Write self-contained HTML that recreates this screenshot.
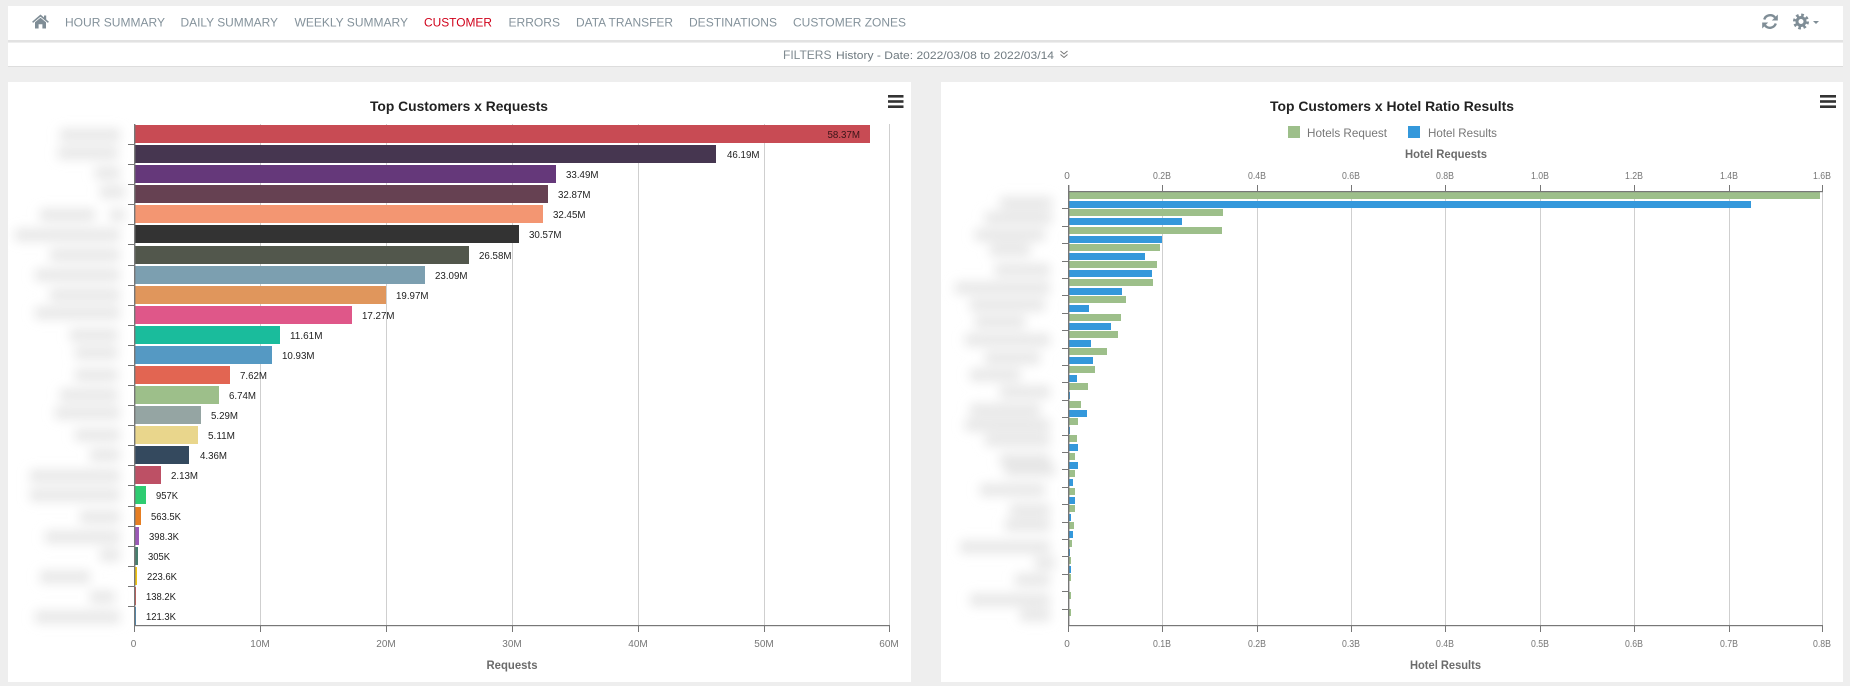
<!DOCTYPE html>
<html><head><meta charset="utf-8"><title>Customer</title>
<style>
html,body{margin:0;padding:0;background:#eee;width:1850px;height:686px;overflow:hidden}
svg{display:block;font-family:"Liberation Sans",sans-serif}
.n{font-size:12px;fill:#84929b}
.v{font-size:10px;fill:#222}
.a{font-size:10px;fill:#777}
.t{font-size:14px;font-weight:bold;fill:#222}
.h{font-size:12px;font-weight:bold;fill:#6b6b6b}
.l{font-size:12px;fill:#777}
.g{fill:#9dbf8a}.b{fill:#3498db}.ax{fill:#777}.gl{fill:#cfcfcf}
.sm rect{fill:#e6e6e6;height:12px;transform:translateY(-2px)}
</style></head><body>
<svg width="1850" height="686" viewBox="0 0 1850 686" xmlns="http://www.w3.org/2000/svg">
<defs><filter id="bl" x="-20%" y="-5%" width="140%" height="110%"><feGaussianBlur stdDeviation="5.5"/></filter></defs>
<rect width="1850" height="686" fill="#eee"/>
<!-- nav -->
<rect x="8" y="6" width="1835" height="34" fill="#fff"/>
<rect x="8" y="40" width="1835" height="2" fill="#e2e2e2"/>
<rect x="8" y="43" width="1835" height="23" fill="#fff"/>
<rect x="8" y="66" width="1835" height="1" fill="#ddd"/>
<!-- home -->
<g fill="#7f8d96">
<path d="M35 22.3L40.5 17.8L46 22.3V28.5H42.4V24.2H38.6V28.5H35Z"/>
<path d="M32.6 22.3L40.5 15.6L48.4 22.3" fill="none" stroke="#7f8d96" stroke-width="1.6"/>
<rect x="44" y="15.5" width="2.2" height="4"/>
</g>
<text class="n" x="65" y="26.5" textLength="100" lengthAdjust="spacingAndGlyphs">HOUR SUMMARY</text>
<text class="n" x="180.5" y="26.5" textLength="97.5" lengthAdjust="spacingAndGlyphs">DAILY SUMMARY</text>
<text class="n" x="294.5" y="26.5" textLength="113.5" lengthAdjust="spacingAndGlyphs">WEEKLY SUMMARY</text>
<text class="n" x="424" y="26.5" textLength="68" lengthAdjust="spacingAndGlyphs" style="fill:#d0021b">CUSTOMER</text>
<text class="n" x="508.5" y="26.5" textLength="51.5" lengthAdjust="spacingAndGlyphs">ERRORS</text>
<text class="n" x="576" y="26.5" textLength="97" lengthAdjust="spacingAndGlyphs">DATA TRANSFER</text>
<text class="n" x="689" y="26.5" textLength="88" lengthAdjust="spacingAndGlyphs">DESTINATIONS</text>
<text class="n" x="793" y="26.5" textLength="113" lengthAdjust="spacingAndGlyphs">CUSTOMER ZONES</text>
<!-- refresh -->
<g fill="none" stroke="#7f8d96" stroke-width="2.4">
<path d="M1764.2 19.5A6.3 6.3 0 0 1 1775 17.5"/>
<path d="M1775.8 23.5A6.3 6.3 0 0 1 1765 25.5"/>
</g>
<polygon points="1777.8,14.5 1777.8,20.5 1771.8,20.5" fill="#7f8d96"/>
<polygon points="1762.2,28.5 1762.2,22.5 1768.2,22.5" fill="#7f8d96"/>
<!-- gear -->
<circle cx="1801" cy="21.5" r="4" fill="none" stroke="#7f8d96" stroke-width="3"/>
<circle cx="1801" cy="21.5" r="6.5" fill="none" stroke="#7f8d96" stroke-width="3" stroke-dasharray="2.6 2.5"/>
<polygon points="1813,21 1819,21 1816,24" fill="#7f8d96"/>
<!-- filter -->
<text class="n" x="783" y="59" textLength="48.5" lengthAdjust="spacingAndGlyphs" style="fill:#7f8a90">FILTERS</text>
<text x="836" y="59" textLength="218" lengthAdjust="spacingAndGlyphs" style="font-size:11px;fill:#6f7a80">History - Date: 2022/03/08 to 2022/03/14</text>
<path d="M1060.5 51L1064 54L1067.5 51M1060.5 54.5L1064 57.5L1067.5 54.5" fill="none" stroke="#777" stroke-width="1"/>

<!-- LEFT PANEL -->
<rect x="8" y="82" width="903" height="600" fill="#fff"/>
<text class="t" x="459" y="111" text-anchor="middle" textLength="178" lengthAdjust="spacingAndGlyphs">Top Customers x Requests</text>
<g fill="#333"><rect x="888" y="95" width="15.5" height="2.6"/><rect x="888" y="100.2" width="15.5" height="2.6"/><rect x="888" y="105.4" width="15.5" height="2.6"/></g>
<g class="sm" filter="url(#bl)">
<rect x="60" y="131" width="60" height="8"/><rect x="58" y="149" width="60" height="8"/><rect x="95" y="169" width="25" height="8"/><rect x="100" y="188" width="25" height="8"/>
<rect x="40" y="211" width="55" height="8"/><rect x="110" y="211" width="15" height="8"/><rect x="15" y="231" width="105" height="8"/><rect x="50" y="251" width="70" height="7"/>
<rect x="35" y="271" width="85" height="8"/><rect x="50" y="291" width="70" height="8"/><rect x="35" y="309" width="85" height="8"/><rect x="70" y="331" width="48" height="8"/>
<rect x="75" y="349" width="43" height="8"/><rect x="75" y="371" width="43" height="8"/><rect x="60" y="391" width="58" height="8"/><rect x="55" y="409" width="65" height="8"/>
<rect x="75" y="431" width="45" height="8"/><rect x="90" y="451" width="30" height="8"/><rect x="30" y="472" width="90" height="8"/><rect x="30" y="491" width="90" height="8"/>
<rect x="80" y="513" width="40" height="8"/><rect x="45" y="533" width="75" height="8"/><rect x="100" y="551" width="20" height="8"/><rect x="40" y="573" width="50" height="8"/>
<rect x="90" y="593" width="25" height="8"/><rect x="35" y="613" width="85" height="8"/>
</g>
<g class="gl">
<rect x="260" y="124" width="1" height="501"/><rect x="386" y="124" width="1" height="501"/><rect x="512" y="124" width="1" height="501"/><rect x="638" y="124" width="1" height="501"/><rect x="764" y="124" width="1" height="501"/><rect x="889" y="124" width="1" height="501"/>
</g>
<rect x="135" y="125" width="735" height="18" fill="#c84b54"/>
<rect x="135" y="145" width="581" height="18" fill="#463650"/>
<rect x="135" y="165" width="421" height="18" fill="#65387a"/>
<rect x="135" y="185" width="413" height="18" fill="#664152"/>
<rect x="135" y="205" width="408" height="18" fill="#f39672"/>
<rect x="135" y="225" width="384" height="18" fill="#333"/>
<rect x="135" y="246" width="334" height="18" fill="#52574c"/>
<rect x="135" y="266" width="290" height="18" fill="#7c9fb0"/>
<rect x="135" y="286" width="251" height="18" fill="#e0965c"/>
<rect x="135" y="306" width="217" height="18" fill="#df5789"/>
<rect x="135" y="326" width="145" height="18" fill="#1abc9c"/>
<rect x="135" y="346" width="137" height="18" fill="#5599c3"/>
<rect x="135" y="366" width="95" height="18" fill="#e26552"/>
<rect x="135" y="386" width="84" height="18" fill="#9dbf8a"/>
<rect x="135" y="406" width="66" height="18" fill="#95a5a3"/>
<rect x="135" y="426" width="63" height="18" fill="#e9d68c"/>
<rect x="135" y="446" width="54" height="18" fill="#34495e"/>
<rect x="135" y="466" width="26" height="18" fill="#bd5065"/>
<rect x="135" y="486" width="11" height="18" fill="#2ecc71"/>
<rect x="135" y="507" width="6" height="18" fill="#e67e22"/>
<rect x="135" y="527" width="4" height="18" fill="#9b59b6"/>
<rect x="135" y="547" width="3" height="18" fill="#477d6d"/>
<rect x="135" y="567" width="2" height="18" fill="#f1c40f"/>
<rect x="135" y="587" width="1" height="18" fill="#d9534f"/>
<rect x="135" y="607" width="1" height="18" fill="#3f8fc4"/>
<g class="ax">
<rect x="134" y="124" width="1.4" height="502"/><rect x="134" y="625" width="756" height="1.2"/>
<rect x="128" y="144" width="6" height="1"/><rect x="128" y="164" width="6" height="1"/><rect x="128" y="184" width="6" height="1"/><rect x="128" y="204" width="6" height="1"/><rect x="128" y="224" width="6" height="1"/><rect x="128" y="244" width="6" height="1"/><rect x="128" y="265" width="6" height="1"/><rect x="128" y="285" width="6" height="1"/><rect x="128" y="305" width="6" height="1"/><rect x="128" y="325" width="6" height="1"/><rect x="128" y="345" width="6" height="1"/><rect x="128" y="365" width="6" height="1"/><rect x="128" y="385" width="6" height="1"/><rect x="128" y="405" width="6" height="1"/><rect x="128" y="425" width="6" height="1"/><rect x="128" y="445" width="6" height="1"/><rect x="128" y="465" width="6" height="1"/><rect x="128" y="485" width="6" height="1"/><rect x="128" y="506" width="6" height="1"/><rect x="128" y="526" width="6" height="1"/><rect x="128" y="546" width="6" height="1"/><rect x="128" y="566" width="6" height="1"/><rect x="128" y="586" width="6" height="1"/><rect x="128" y="606" width="6" height="1"/>
<rect x="134" y="625" width="1" height="7"/><rect x="260" y="625" width="1" height="7"/><rect x="386" y="625" width="1" height="7"/><rect x="512" y="625" width="1" height="7"/><rect x="638" y="625" width="1" height="7"/><rect x="764" y="625" width="1" height="7"/><rect x="889" y="625" width="1" height="7"/>
</g>
<text class="v" x="827.5" y="138" textLength="32.5" lengthAdjust="spacingAndGlyphs" style="fill:#3a1518">58.37M</text>
<text class="v" x="727" y="158" textLength="32.5" lengthAdjust="spacingAndGlyphs">46.19M</text>
<text class="v" x="566" y="178" textLength="32.5" lengthAdjust="spacingAndGlyphs">33.49M</text>
<text class="v" x="558" y="198" textLength="32.5" lengthAdjust="spacingAndGlyphs">32.87M</text>
<text class="v" x="553" y="218" textLength="32.5" lengthAdjust="spacingAndGlyphs">32.45M</text>
<text class="v" x="529" y="238" textLength="32.5" lengthAdjust="spacingAndGlyphs">30.57M</text>
<text class="v" x="479" y="259" textLength="32.5" lengthAdjust="spacingAndGlyphs">26.58M</text>
<text class="v" x="435" y="279" textLength="32.5" lengthAdjust="spacingAndGlyphs">23.09M</text>
<text class="v" x="396" y="299" textLength="32.5" lengthAdjust="spacingAndGlyphs">19.97M</text>
<text class="v" x="362" y="319" textLength="32.5" lengthAdjust="spacingAndGlyphs">17.27M</text>
<text class="v" x="290" y="339" textLength="32.5" lengthAdjust="spacingAndGlyphs">11.61M</text>
<text class="v" x="282" y="359" textLength="32.5" lengthAdjust="spacingAndGlyphs">10.93M</text>
<text class="v" x="240" y="379" textLength="27" lengthAdjust="spacingAndGlyphs">7.62M</text>
<text class="v" x="229" y="399" textLength="27" lengthAdjust="spacingAndGlyphs">6.74M</text>
<text class="v" x="211" y="419" textLength="27" lengthAdjust="spacingAndGlyphs">5.29M</text>
<text class="v" x="208" y="439" textLength="27" lengthAdjust="spacingAndGlyphs">5.11M</text>
<text class="v" x="200" y="459" textLength="27" lengthAdjust="spacingAndGlyphs">4.36M</text>
<text class="v" x="171" y="479" textLength="27" lengthAdjust="spacingAndGlyphs">2.13M</text>
<text class="v" x="156" y="499" textLength="22" lengthAdjust="spacingAndGlyphs">957K</text>
<text class="v" x="151" y="520" textLength="30" lengthAdjust="spacingAndGlyphs">563.5K</text>
<text class="v" x="149" y="540" textLength="30" lengthAdjust="spacingAndGlyphs">398.3K</text>
<text class="v" x="148" y="560" textLength="22" lengthAdjust="spacingAndGlyphs">305K</text>
<text class="v" x="147" y="580" textLength="30" lengthAdjust="spacingAndGlyphs">223.6K</text>
<text class="v" x="146" y="600" textLength="30" lengthAdjust="spacingAndGlyphs">138.2K</text>
<text class="v" x="146" y="620" textLength="30" lengthAdjust="spacingAndGlyphs">121.3K</text>
<g class="a" text-anchor="middle">
<text x="133.5" y="647">0</text><text x="260" y="647">10M</text><text x="386" y="647">20M</text><text x="512" y="647">30M</text><text x="638" y="647">40M</text><text x="764" y="647">50M</text><text x="889" y="647">60M</text>
</g>
<text class="h" x="512" y="669" text-anchor="middle" textLength="51" lengthAdjust="spacingAndGlyphs">Requests</text>

<!-- RIGHT PANEL -->
<rect x="941" y="82" width="902" height="600" fill="#fff"/>
<text class="t" x="1392" y="111" text-anchor="middle" textLength="244" lengthAdjust="spacingAndGlyphs">Top Customers x Hotel Ratio Results</text>
<g fill="#333"><rect x="1820" y="95" width="16" height="2.6"/><rect x="1820" y="100.2" width="16" height="2.6"/><rect x="1820" y="105.4" width="16" height="2.6"/></g>
<rect x="1288" y="126" width="12" height="12" fill="#9dbf8a"/>
<text class="l" x="1307" y="137" textLength="80" lengthAdjust="spacingAndGlyphs">Hotels Request</text>
<rect x="1408" y="126" width="12" height="12" fill="#3498db"/>
<text class="l" x="1428" y="137" textLength="69" lengthAdjust="spacingAndGlyphs">Hotel Results</text>
<text class="h" x="1446" y="158" text-anchor="middle" textLength="82" lengthAdjust="spacingAndGlyphs">Hotel Requests</text>
<g class="sm" filter="url(#bl)">
<rect x="1000" y="199" width="52" height="8"/><rect x="985" y="214" width="67" height="8"/><rect x="975" y="231" width="70" height="8"/><rect x="990" y="246" width="40" height="8"/>
<rect x="995" y="266" width="55" height="8"/><rect x="955" y="284" width="95" height="8"/><rect x="970" y="301" width="75" height="8"/><rect x="975" y="318" width="50" height="8"/>
<rect x="965" y="336" width="85" height="8"/><rect x="985" y="354" width="55" height="8"/><rect x="970" y="371" width="50" height="8"/><rect x="1000" y="388" width="50" height="8"/>
<rect x="970" y="406" width="70" height="8"/><rect x="965" y="421" width="85" height="8"/><rect x="985" y="436" width="65" height="8"/><rect x="1000" y="456" width="50" height="8"/>
<rect x="1005" y="466" width="50" height="8"/><rect x="980" y="486" width="65" height="8"/><rect x="1010" y="506" width="40" height="8"/><rect x="1005" y="521" width="45" height="8"/>
<rect x="960" y="543" width="90" height="8"/><rect x="1035" y="559" width="20" height="8"/><rect x="1015" y="576" width="35" height="8"/><rect x="970" y="596" width="80" height="8"/><rect x="1020" y="611" width="30" height="8"/>
</g>
<g class="gl">
<rect x="1162" y="185" width="1" height="440"/><rect x="1257" y="185" width="1" height="440"/><rect x="1351" y="185" width="1" height="440"/><rect x="1445" y="185" width="1" height="440"/><rect x="1540" y="185" width="1" height="440"/><rect x="1634" y="185" width="1" height="440"/><rect x="1729" y="185" width="1" height="440"/><rect x="1822" y="185" width="1" height="440"/>
</g>
<g class="g">
<rect x="1069" y="192" width="751" height="7"/><rect x="1069" y="209" width="154" height="7"/><rect x="1069" y="227" width="153" height="7"/><rect x="1069" y="244" width="91" height="7"/><rect x="1069" y="261" width="88" height="7"/><rect x="1069" y="279" width="84" height="7"/><rect x="1069" y="296" width="57" height="7"/><rect x="1069" y="314" width="52" height="7"/><rect x="1069" y="331" width="49" height="7"/><rect x="1069" y="348" width="38" height="7"/><rect x="1069" y="366" width="26" height="7"/><rect x="1069" y="383" width="19" height="7"/><rect x="1069" y="401" width="12" height="7"/><rect x="1069" y="418" width="9" height="7"/><rect x="1069" y="435" width="8" height="7"/><rect x="1069" y="453" width="6" height="7"/><rect x="1069" y="470" width="6" height="7"/><rect x="1069" y="488" width="6" height="7"/><rect x="1069" y="505" width="6" height="7"/><rect x="1069" y="522" width="5" height="7"/><rect x="1069" y="540" width="3" height="7"/><rect x="1069" y="557" width="2" height="7"/><rect x="1069" y="574" width="2" height="7"/><rect x="1069" y="592" width="2" height="7"/><rect x="1069" y="609" width="2" height="7"/>
</g>
<g class="b">
<rect x="1069" y="201" width="682" height="7"/><rect x="1069" y="218" width="113" height="7"/><rect x="1069" y="236" width="93" height="7"/><rect x="1069" y="253" width="76" height="7"/><rect x="1069" y="270" width="83" height="7"/><rect x="1069" y="288" width="53" height="7"/><rect x="1069" y="305" width="20" height="7"/><rect x="1069" y="323" width="42" height="7"/><rect x="1069" y="340" width="22" height="7"/><rect x="1069" y="357" width="24" height="7"/><rect x="1069" y="375" width="8" height="7"/><rect x="1069" y="392" width="1" height="7"/><rect x="1069" y="410" width="18" height="7"/><rect x="1069" y="427" width="1" height="7"/><rect x="1069" y="444" width="9" height="7"/><rect x="1069" y="462" width="9" height="7"/><rect x="1069" y="479" width="4" height="7"/><rect x="1069" y="497" width="6" height="7"/><rect x="1069" y="514" width="2" height="7"/><rect x="1069" y="531" width="4" height="7"/><rect x="1069" y="549" width="1" height="7"/><rect x="1069" y="566" width="2" height="7"/>
</g>
<g class="ax">
<rect x="1068" y="185" width="1.4" height="441"/><rect x="1068" y="191" width="755" height="1.2"/><rect x="1068" y="625" width="755" height="1.2"/>
<rect x="1162" y="185" width="1" height="6"/><rect x="1257" y="185" width="1" height="6"/><rect x="1351" y="185" width="1" height="6"/><rect x="1445" y="185" width="1" height="6"/><rect x="1540" y="185" width="1" height="6"/><rect x="1634" y="185" width="1" height="6"/><rect x="1729" y="185" width="1" height="6"/><rect x="1822" y="185" width="1" height="6"/>
<rect x="1068" y="625" width="1" height="7"/><rect x="1162" y="625" width="1" height="7"/><rect x="1257" y="625" width="1" height="7"/><rect x="1351" y="625" width="1" height="7"/><rect x="1445" y="625" width="1" height="7"/><rect x="1540" y="625" width="1" height="7"/><rect x="1634" y="625" width="1" height="7"/><rect x="1729" y="625" width="1" height="7"/><rect x="1822" y="625" width="1" height="7"/>
<rect x="1062" y="208" width="6" height="1"/><rect x="1062" y="226" width="6" height="1"/><rect x="1062" y="243" width="6" height="1"/><rect x="1062" y="261" width="6" height="1"/><rect x="1062" y="278" width="6" height="1"/><rect x="1062" y="295" width="6" height="1"/><rect x="1062" y="313" width="6" height="1"/><rect x="1062" y="330" width="6" height="1"/><rect x="1062" y="348" width="6" height="1"/><rect x="1062" y="365" width="6" height="1"/><rect x="1062" y="382" width="6" height="1"/><rect x="1062" y="400" width="6" height="1"/><rect x="1062" y="417" width="6" height="1"/><rect x="1062" y="435" width="6" height="1"/><rect x="1062" y="452" width="6" height="1"/><rect x="1062" y="469" width="6" height="1"/><rect x="1062" y="487" width="6" height="1"/><rect x="1062" y="504" width="6" height="1"/><rect x="1062" y="522" width="6" height="1"/><rect x="1062" y="539" width="6" height="1"/><rect x="1062" y="556" width="6" height="1"/><rect x="1062" y="574" width="6" height="1"/><rect x="1062" y="591" width="6" height="1"/><rect x="1062" y="609" width="6" height="1"/>
</g>
<g class="a" text-anchor="middle">
<text x="1067" y="179">0</text>
<text x="1162" y="179" textLength="18" lengthAdjust="spacingAndGlyphs">0.2B</text>
<text x="1257" y="179" textLength="18" lengthAdjust="spacingAndGlyphs">0.4B</text>
<text x="1351" y="179" textLength="18" lengthAdjust="spacingAndGlyphs">0.6B</text>
<text x="1445" y="179" textLength="18" lengthAdjust="spacingAndGlyphs">0.8B</text>
<text x="1540" y="179" textLength="18" lengthAdjust="spacingAndGlyphs">1.0B</text>
<text x="1634" y="179" textLength="18" lengthAdjust="spacingAndGlyphs">1.2B</text>
<text x="1729" y="179" textLength="18" lengthAdjust="spacingAndGlyphs">1.4B</text>
<text x="1822" y="179" textLength="18" lengthAdjust="spacingAndGlyphs">1.6B</text>
<text x="1067" y="647">0</text>
<text x="1162" y="647" textLength="18" lengthAdjust="spacingAndGlyphs">0.1B</text>
<text x="1257" y="647" textLength="18" lengthAdjust="spacingAndGlyphs">0.2B</text>
<text x="1351" y="647" textLength="18" lengthAdjust="spacingAndGlyphs">0.3B</text>
<text x="1445" y="647" textLength="18" lengthAdjust="spacingAndGlyphs">0.4B</text>
<text x="1540" y="647" textLength="18" lengthAdjust="spacingAndGlyphs">0.5B</text>
<text x="1634" y="647" textLength="18" lengthAdjust="spacingAndGlyphs">0.6B</text>
<text x="1729" y="647" textLength="18" lengthAdjust="spacingAndGlyphs">0.7B</text>
<text x="1822" y="647" textLength="18" lengthAdjust="spacingAndGlyphs">0.8B</text>
</g>
<text class="h" x="1445.5" y="669" text-anchor="middle" textLength="71" lengthAdjust="spacingAndGlyphs">Hotel Results</text>
</svg>
</body></html>
